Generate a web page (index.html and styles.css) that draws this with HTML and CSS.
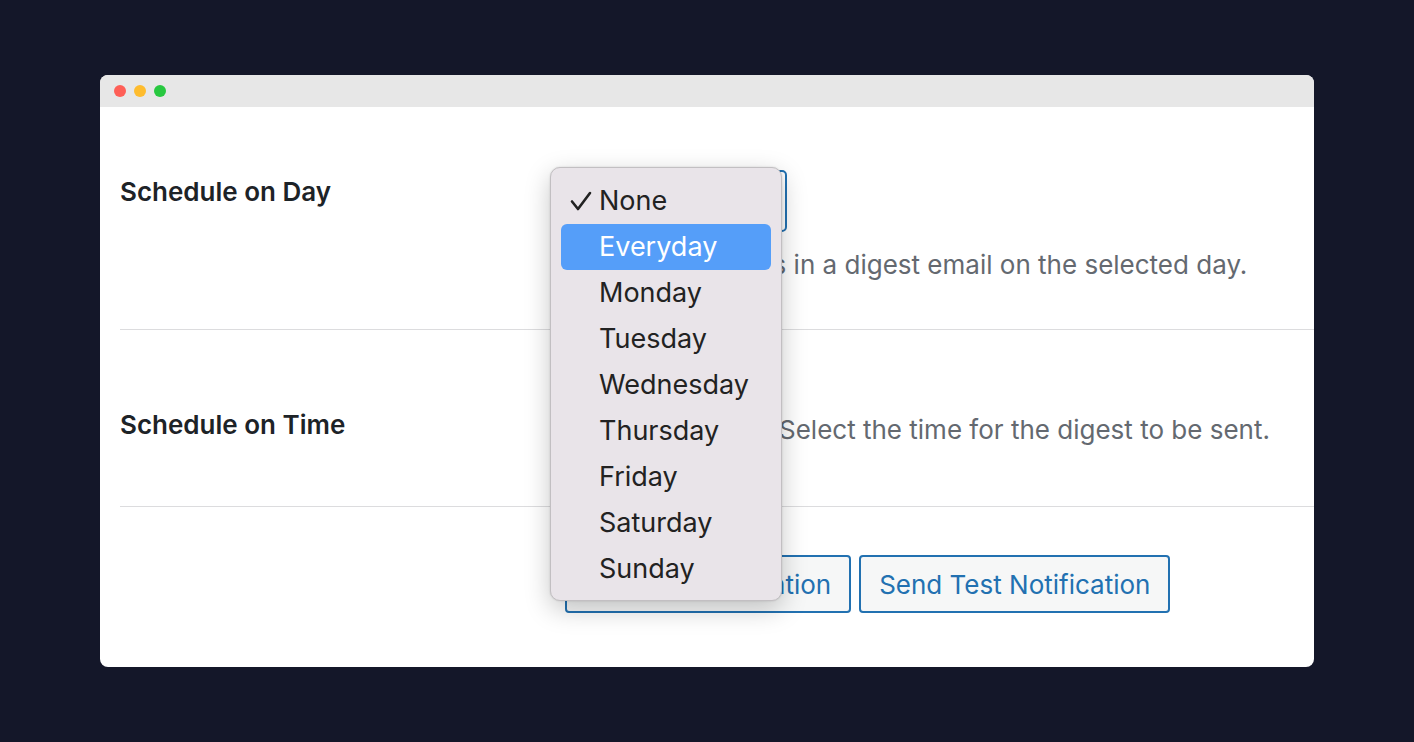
FILE: index.html
```html
<!DOCTYPE html>
<html>
<head>
<meta charset="utf-8">
<link rel="stylesheet" href="styles.css">
</head>
<body>
<div class="window">
  <div class="titlebar">
    <span class="dot red"></span>
    <span class="dot yellow"></span>
    <span class="dot green"></span>
  </div>
  <div class="content">
    <div class="row row-day">
      <div class="label">Schedule on Day</div>
      <div class="field">
        <div class="select"></div>
        <p class="desc">Send notifications in a digest email on the selected day.</p>
      </div>
    </div>
    <div class="row row-time">
      <div class="label">Schedule on Time</div>
      <div class="field inline">
        <div class="time-input"></div>
        <p class="desc">Select the time for the digest to be sent.</p>
      </div>
    </div>
    <div class="row row-actions">
      <div class="label"></div>
      <div class="field inline buttons">
        <button class="btn">Preview Notification</button>
        <button class="btn">Send Test Notification</button>
      </div>
    </div>
  </div>
  <div class="menu">
    <div class="item checked">
      <svg class="check" viewBox="0 0 22 22" width="22" height="22"><path d="M2 11.5 L8 19 L20 3" fill="none" stroke="#222" stroke-width="2.6" stroke-linecap="round" stroke-linejoin="round"/></svg>
      None
    </div>
    <div class="item active">Everyday</div>
    <div class="item">Monday</div>
    <div class="item">Tuesday</div>
    <div class="item">Wednesday</div>
    <div class="item">Thursday</div>
    <div class="item">Friday</div>
    <div class="item">Saturday</div>
    <div class="item">Sunday</div>
  </div>
</div>
</body>
</html>
```

FILE: styles.css
```css
* { box-sizing: border-box; }

html, body {
  margin: 0;
  padding: 0;
  background: #141729;
  font-family: Inter, "Liberation Sans", sans-serif;
}

body {
  padding: 75px 100px;
}

.window {
  position: relative;
  width: 1214px;
  height: 592px;
  background: #ffffff;
  border-radius: 8px;
  overflow: hidden;
}

.titlebar {
  height: 32px;
  background: #e7e7e7;
  display: flex;
  align-items: center;
  gap: 8px;
  padding-left: 14px;
}

.dot {
  width: 12px;
  height: 12px;
  border-radius: 50%;
}
.red { background: #fe5f57; }
.yellow { background: #febc2e; }
.green { background: #28c840; }

.content {
  padding-left: 20px;
}

.row {
  display: flex;
  align-items: flex-start;
  border-bottom: 1px solid #dcdcde;
}

.label {
  width: 445px;
  flex: none;
  font-size: 26px;
  font-weight: 600;
  line-height: 36px;
  color: #1d2327;
}

.field.inline {
  display: flex;
  align-items: center;
}

.desc {
  margin: 0;
  font-size: 26px;
  line-height: 36px;
  color: #646970;
  white-space: nowrap;
}

.row-day {
  height: 223px;
  padding-top: 63px;
}
.row-day .label { margin-top: 4px; }
.row-day .desc { margin-top: 15px; }

.select {
  width: 222px;
  height: 62px;
  border: 2px solid #2271b1;
  border-radius: 5px;
}

.row-time {
  height: 177px;
  padding-top: 71px;
}
.row-time .label { margin-top: 6px; }
.time-input {
  width: 200px;
  height: 58px;
  border: 1px solid #8c8f94;
  border-radius: 4px;
  margin-right: 14px;
}

.row-actions {
  border-bottom: none;
  padding-top: 48px;
}
.buttons { gap: 8px; }

.btn {
  height: 58px;
  padding: 0 18px;
  font-family: inherit;
  font-size: 26px;
  color: #2271b1;
  background: #f6f7f7;
  border: 2px solid #2271b1;
  border-radius: 4px;
}

.menu {
  position: absolute;
  left: 450px;
  top: 92px;
  width: 232px;
  height: 434px;
  padding: 10px;
  background: #e9e4e9;
  border: 1px solid #c2bfc2;
  border-radius: 10px;
  box-shadow: 0 8px 26px rgba(0, 0, 0, 0.22), 0 0 2px rgba(0, 0, 0, 0.15);
}

.item {
  position: relative;
  height: 46px;
  line-height: 46px;
  padding-left: 38px;
  font-size: 27px;
  color: #222222;
  border-radius: 6px;
}

.item.active {
  background: #559ef9;
  color: #ffffff;
}

.check {
  position: absolute;
  left: 9px;
  top: 12px;
}
```
